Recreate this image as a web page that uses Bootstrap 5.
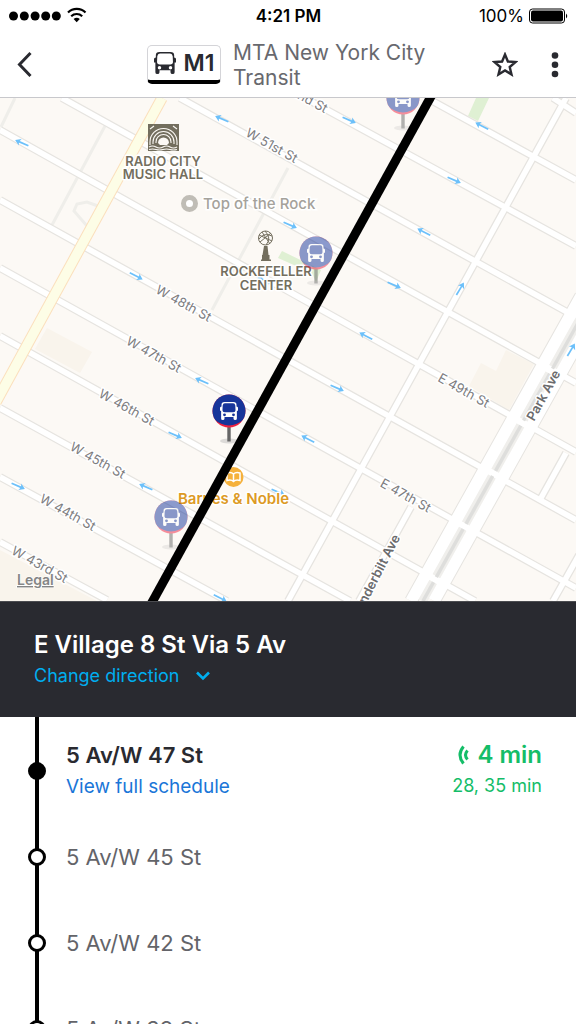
<!DOCTYPE html>
<html lang="en">
<head>
<meta charset="utf-8">
<meta name="viewport" content="width=device-width, initial-scale=1">
<title>M1 – MTA New York City Transit</title>
<link href="https://cdn.jsdelivr.net/npm/bootstrap@5.3.0/dist/css/bootstrap.min.css" rel="stylesheet">
<style>
  body { font-family: Inter, "Liberation Sans", sans-serif; color: #292a30; background: #fff; }
  .status-bar { height: 32px; font-size: 17px; line-height: 20px; color: #000; padding-left: 9px; padding-right: 8px; }
  .top-bar { height: 66px; border-bottom: 1px solid #c8c8cc; padding-left: 12px; padding-right: 8px; }
  .icon-btn { display: flex; border: 0; background: none; padding: 0; color: #292a30; }
  .route-badge { width: 74px; height: 39px; border: 1px solid #d4d4d8; border-bottom: 4px solid #000; border-radius: 5px; font-size: 23px; line-height: 24px; font-weight: 600; }
  .agency { font-size: 21px; line-height: 25px; color: #68696e; width: 208px; }
  .map-view svg { width: 100%; height: auto; }
  .map-view text { font-family: Inter, "Liberation Sans", sans-serif; }
  .direction { background: #292a30; padding: 28px 34px 26px; border-top: 1px solid #4b4c50; }
  .direction h1 { font-size: 24px; line-height: 30px; font-weight: 600; color: #fff; }
  .direction button { font-size: 18px; line-height: 31px; color: #00aeef; }
  .stops { scrollbar-width: none; }
  .stop { height: 86px; padding-left: 66px; padding-right: 34px; font-size: 22px; line-height: 28px; color: #636469; }
  .stop::before { content: ""; position: absolute; left: 35px; top: 0; bottom: 0; width: 4px; background: #000; }
  .stop::after { content: ""; position: absolute; left: 28px; top: 50%; width: 18px; height: 18px; margin-top: -9px; border: 3px solid #000; border-radius: 50%; background: #fff; }
  .stop-current { height: 97px; padding-top: 22px; color: #292a30; }
  .stop-current::after { background: #000; top: 54px; }
  .stop-name, .eta { line-height: 32px; font-weight: 600; }
  .stop-name { font-size: 22px; }
  .eta { font-size: 24px; }
  .schedule { font-size: 19px; line-height: 32px; color: #1a76d8; }
  .times { color: #14bd68; }
  .later { font-size: 18px; line-height: 30px; }
</style>
</head>
<body>
<div class="vh-100 d-flex flex-column overflow-hidden">
  <div class="status-bar d-flex align-items-center flex-shrink-0">
    <div class="col d-flex align-items-center">
      <svg width="78" height="18" viewBox="0 0 78 18" role="img" aria-label="Full signal, Wi-Fi">
        <g><circle cx="4.500" cy="9" r="4.500"/><circle cx="15.300" cy="9" r="4.500"/><circle cx="26.100" cy="9" r="4.500"/><circle cx="36.700" cy="9" r="4.500"/><circle cx="47.300" cy="9" r="4.500"/></g>
        <g fill="none" stroke="#000" stroke-width="2.200"><path d="M59 5.500a12.500 12.500 0 0 1 17.500 0"/><path d="M62.200 9.200a8 8 0 0 1 11 0"/></g>
        <path d="M64.600 12a4.700 4.700 0 0 1 6.200 0l-3.100 3.300z"/>
      </svg>
    </div>
    <div class="fw-semibold">4:21 PM</div>
    <div class="col d-flex align-items-center justify-content-end gap-1">
      <span>100%</span>
      <svg width="40" height="16" viewBox="0 0 40 16" role="img" aria-label="Battery full"><rect x="1.500" y="1" width="35" height="14" rx="3" fill="#fff" stroke="#000"/><rect x="3" y="2.500" width="32" height="11" rx="2"/><path d="M38 5.500q2.500 2.500 0 5z"/></svg>
    </div>
  </div>

  <header class="top-bar d-flex align-items-center flex-shrink-0">
    <div class="col"><button class="icon-btn" aria-label="Back"><svg width="26" height="30" viewBox="0 0 26 30" fill="none" stroke="currentColor" stroke-width="3"><path d="M18.500 3 7.500 14.500l11 11.500"/></svg></button></div>
    <div class="route-badge d-flex align-items-center justify-content-center gap-2 ms-1">
      <svg width="22" height="22" viewBox="0 0 24 24" aria-hidden="true"><path fill="#292a30" fill-rule="evenodd" d="M6 0h12q4 0 4 3.500V6q2 .3 2 1.500v4h-1.500V22q0 2-2.200 2t-2.300-2v-2H6v2q0 2-2.300 2t-2.200-2V11.500H0v-4Q0 6.300 2 6V3.500Q2 0 6 0ZM6.500 1.700Q4 1.700 3.600 4.500L3.300 11q0 2.500 3 2.500h11.400q3 0 3-2.500l-.3-6.500Q20 1.700 17.500 1.700ZM6 15.200a1.900 1.900 0 1 0 0 3.800 1.900 1.900 0 0 0 0-3.800Zm12 0a1.900 1.900 0 1 0 0 3.800 1.900 1.900 0 0 0 0-3.800Z"/></svg>
      <span>M1</span>
    </div>
    <div class="agency ms-2 ps-1">MTA New York City Transit</div>
    <div class="col d-flex justify-content-end align-items-center gap-4">
      <button class="icon-btn" aria-label="Add to favourites"><svg width="26" height="26" viewBox="0 0 26 26" fill="none" stroke="currentColor" stroke-width="2.400"><path d="m13 2.500 2.900 7 7.500.600-5.700 4.900 1.800 7.400-6.500-4-6.500 4 1.800-7.400-5.700-4.900 7.500-.600z"/></svg></button>
      <button class="icon-btn" aria-label="More"><svg width="26" height="26" viewBox="0 0 26 26" fill="currentColor"><circle cx="13" cy="3.500" r="3.300"/><circle cx="13" cy="12.800" r="3.300"/><circle cx="13" cy="22" r="3.300"/></svg></button>
    </div>
  </header>

  <main class="map-view flex-shrink-0">
    <svg class="d-block" viewBox="0 98 576 503" role="img" aria-label="Map of the M1 route in Midtown Manhattan">
      <defs>
        <g id="streets">
          <path d="M62 98 576 383M0 130 576 452M0 200 576 520M0 268 576 588M0 336 475 601M0 408 350 601M0 477 227 601M0 542 107 600M180 98 576 317M305 98 576 246M427 98 576 180M553 98 576 113"/>
          <path d="M566 98 288 601M411 507 359 601M566 453 541 498M579 555 553 601"/>
        </g>
        <g id="arrow"><path d="M-7 0H4" stroke="#6cc0fa" stroke-width="1.700"/><path d="M2-3.600 7.500 0 2 3.600 3.300 0z" fill="#6cc0fa"/></g>
        <clipPath id="disc"><circle r="16.500"/></clipPath>
        <g id="pin">
          <ellipse cx="0" cy="30" rx="9" ry="2.600" fill="#bbb" opacity=".5"/>
          <path d="M0 15V30.500" stroke="#666" stroke-width="3.400"/>
          <circle r="16.500" fill="#f0213f"/>
          <circle cy="-6" r="20.400" fill="#17359a" clip-path="url(#disc)"/>
          <path transform="translate(-9 -9) scale(.75)" fill="#fff" fill-rule="evenodd" d="M6 0h12q4 0 4 3.500V6q2 .3 2 1.500v4h-1.500V22q0 2-2.200 2t-2.300-2v-2H6v2q0 2-2.300 2t-2.200-2V11.500H0v-4Q0 6.300 2 6V3.500Q2 0 6 0ZM6.500 1.700Q4 1.700 3.600 4.500L3.300 11q0 2.500 3 2.500h11.400q3 0 3-2.500l-.3-6.500Q20 1.700 17.500 1.700ZM6 15.200a1.900 1.900 0 1 0 0 3.800 1.900 1.900 0 0 0 0-3.800Zm12 0a1.900 1.900 0 1 0 0 3.800 1.900 1.900 0 0 0 0-3.800Z"/>
        </g>
      </defs>
      <rect y="98" width="576" height="503" fill="#fcf9f5"/>
      <g fill="#f9f4ec"><path d="M47 328 92 352 80 373 35 349zM481 363l15 8 10-21 28 14-25 46-40-24zM0 550 97 601H0z"/></g>
      <path fill="#dff0d3" d="M476 98h13l-11 23-10-5zM282 251l39 19-5 12-4-9-34-15z"/>
      <path fill="none" stroke="#efeeea" stroke-width="3" d="M15 98 1 127M105 126 52 225M98 206 87 202 77 204 74 211 87 226M288 168 212 310"/>
      <use href="#streets" fill="none" stroke="#e6e4e0" stroke-width="8"/>
      <path d="M581 296 411 601M604 296 434 601" stroke="#e6e4e0" stroke-width="13.500"/>
      <path d="M592 296 422 601" stroke="#f0efec" stroke-width="10"/>
      <use href="#streets" fill="none" stroke="#fff" stroke-width="5.500"/>
      <path d="M581 296 411 601M604 296 434 601" stroke="#fff" stroke-width="11.500"/>
      <path d="M593 296 423 601" stroke="#dededc" stroke-width="3.500"/>
      <path d="m513 418 18 10M486 469l18 10M453 520l18 10M423 573l18 10M540 365l18 10" stroke="#fff" stroke-width="6"/>
      <path d="M162 98-4 402" stroke="#fbdfbc" stroke-width="11.500"/>
      <path d="M162 98-4 402" stroke="#fdfde6" stroke-width="9.500"/>

      <g>
        <g><use href="#arrow" transform="translate(349 120) rotate(24)"/><use href="#arrow" transform="translate(454 180) rotate(24)"/><use href="#arrow" transform="translate(394 285) rotate(24)"/><use href="#arrow" transform="translate(136 276) rotate(27)"/><use href="#arrow" transform="translate(290 225) rotate(24)"/><use href="#arrow" transform="translate(175 435) rotate(24)"/><use href="#arrow" transform="translate(18 486) rotate(24)"/><use href="#arrow" transform="translate(278 492) rotate(24)"/><use href="#arrow" transform="translate(220 598) rotate(27)"/><use href="#arrow" transform="translate(337 388) rotate(24)"/></g>
        <g><use href="#arrow" transform="translate(22 143) rotate(204)"/><use href="#arrow" transform="translate(222 119) rotate(204)"/><use href="#arrow" transform="translate(482 126) rotate(207)"/><use href="#arrow" transform="translate(424 232) rotate(207)"/><use href="#arrow" transform="translate(366 336) rotate(207)"/><use href="#arrow" transform="translate(202 381) rotate(204)"/><use href="#arrow" transform="translate(146 487) rotate(204)"/><use href="#arrow" transform="translate(308 439) rotate(207)"/><use href="#arrow" transform="translate(264 280) rotate(207)"/></g>
        <g><use href="#arrow" transform="translate(460 289) rotate(-59)"/><use href="#arrow" transform="translate(571 350) rotate(-59)"/></g>
      </g>

      <g fill="#7d7d7f" font-size="13" text-anchor="middle" stroke="#fff" stroke-width="3" stroke-linejoin="round" paint-order="stroke">
        <text transform="translate(327 109) rotate(29)" dy="5" text-anchor="end">W 52nd St</text>
        <text transform="translate(272 145) rotate(29)" dy="5">W 51st St</text>
        <text transform="translate(184 303) rotate(29)" dy="5">W 48th St</text>
        <text transform="translate(154 354) rotate(29)" dy="5">W 47th St</text>
        <text transform="translate(127 407) rotate(29)" dy="5">W 46th St</text>
        <text transform="translate(98 460) rotate(29)" dy="5">W 45th St</text>
        <text transform="translate(68 512) rotate(29)" dy="5">W 44th St</text>
        <text transform="translate(40 564) rotate(29)" dy="5">W 43rd St</text>
        <text transform="translate(464 390) rotate(29)" dy="5">E 49th St</text>
        <text transform="translate(406 495) rotate(29)" dy="5">E 47th St</text>
      </g>
      <g fill="#6b6b6d" font-size="13" font-weight="600" stroke="#fff" stroke-width="3" stroke-linejoin="round" paint-order="stroke">
        <text transform="translate(543 395) rotate(-61)" dy="5" text-anchor="middle">Park Ave</text>
        <text transform="translate(396 535) rotate(-63)" dy="5" text-anchor="end">Vanderbilt Ave</text>
      </g>

      <g fill="#736e5e">
        <rect x="148" y="124" width="31" height="27"/>
        <g fill="none" stroke="#fcf9f5" stroke-width="1.100"><path d="M150 145v-3a13.500 13.500 0 0 1 27 0v3M153 144v-2a10.500 10.500 0 0 1 21 0v2M156 143v-1a7.500 7.500 0 0 1 15 0v1M149 147q3.500-2 7 0t7 0 7 0 7 0M149 149.500q3.500-1 7 0t7 0 7 0 7 0M150 129l4-3M177 129l-4-3"/></g>
        <path fill="#fcf9f5" d="M158 143a5.500 5.500 0 0 1 11 0l-2 2h-7z"/>
        <g fill="none" stroke="#736e5e" stroke-width="1"><circle cx="265.500" cy="238" r="7"/><path d="M259 235l13 6M260 242l11-9M262 232l8 12M265 231q7 7 1 14M259 239q5-7 13-3"/></g>
        <path d="M264 246h3.500l1 9v6h-6v-6zM262 255h7.500v5H262zM261 259.500h10v1.500h-10z"/>
      </g>
      <g fill="#736e5e" font-size="13" font-weight="600" text-anchor="middle" stroke="#fff" stroke-width="3" stroke-linejoin="round" paint-order="stroke">
        <text x="163" y="166">RADIO CITY</text><text x="163" y="179">MUSIC HALL</text>
        <text x="266" y="276">ROCKEFELLER</text><text x="266" y="290">CENTER</text>
      </g>
      <circle cx="189.500" cy="203.500" r="6" fill="#fff" stroke="#c0bdb6" stroke-width="5"/>
      <text x="203" y="209" font-size="15" font-weight="500" fill="#a5a29b" stroke="#fff" stroke-width="3" paint-order="stroke">Top of the Rock</text>
      <circle cx="233.500" cy="477" r="10" fill="#f5b13c"/>
      <path d="M227 473q4-1.500 6.500 1 2.500-2.500 6.500-1v7.500q-4-1.500-6.500 1-2.500-2.500-6.500-1zM233.500 474v7" fill="none" stroke="#fff" stroke-width="1.500"/>
      <text x="233.500" y="504" text-anchor="middle" font-size="15" font-weight="600" fill="#dd9a24" stroke="#fff" stroke-width="3" stroke-linejoin="round" paint-order="stroke">Barnes &amp; Noble</text>
      <a href="#legal"><text x="17" y="585" font-size="14" font-weight="600" fill="#858585" text-decoration="underline" stroke="#fff" stroke-width="1" paint-order="stroke">Legal</text></a>

      <g opacity=".5"><use href="#pin" x="403" y="98"/><use href="#pin" x="316" y="253"/><use href="#pin" x="171" y="517"/></g>
      <use href="#pin" x="229" y="411"/>
      <path d="M434 91 150 606" stroke="#000" stroke-width="9"/>
    </svg>
  </main>

  <section class="direction flex-shrink-0">
    <h1 class="m-0">E Village 8 St Via 5 Av</h1>
    <button class="btn p-0 border-0 d-flex align-items-center gap-2">Change direction
      <svg class="ms-2" width="16" height="12" viewBox="0 0 16 12" fill="none" stroke="currentColor" stroke-width="2.600"><path d="m2 2.500 6 6 6-6"/></svg>
    </button>
  </section>

  <ul class="stops list-unstyled m-0 flex-grow-1 overflow-auto">
    <li class="stop stop-current position-relative d-flex justify-content-between">
      <div>
        <div class="stop-name">5 Av/W 47 St</div>
        <a class="schedule d-block text-decoration-none" href="#schedule">View full schedule</a>
      </div>
      <div class="times text-end">
        <div class="eta d-flex align-items-center justify-content-end gap-2"><svg width="11" height="20" viewBox="0 0 11 20" fill="none" stroke="currentColor" stroke-width="3" aria-hidden="true"><path d="M5.500 1.500q-7 8.500 0 17M9.500 5.500q-4 4.500 0 9"/></svg>4 min</div>
        <div class="later">28, 35 min</div>
      </div>
    </li>
    <li class="stop position-relative d-flex align-items-center">5 Av/W 45 St</li>
    <li class="stop position-relative d-flex align-items-center">5 Av/W 42 St</li>
    <li class="stop position-relative d-flex align-items-center">5 Av/W 39 St</li>
  </ul>
</div>
<script src="https://cdn.jsdelivr.net/npm/bootstrap@5.3.0/dist/js/bootstrap.bundle.min.js"></script>
</body>
</html>
